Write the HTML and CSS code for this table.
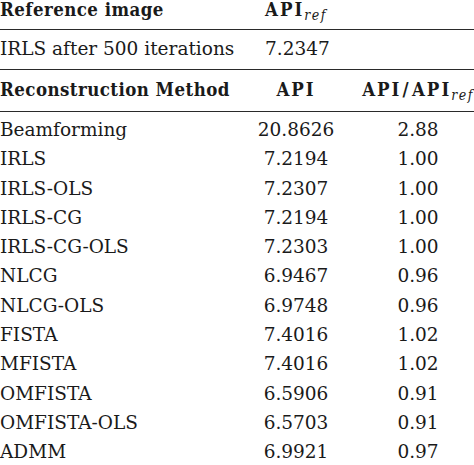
FILE: index.html
```html
<!DOCTYPE html>
<html>
<head>
<meta charset="utf-8">
<link rel="stylesheet" href="styles.css">
</head>
<body>
<div class="sheet">
  <div class="top">
    <div class="row r1 rule">
      <div class="c b">Reference image</div>
      <div class="c b"><span class="wide">API</span><sub class="sub">ref</sub></div>
    </div>
    <div class="row r2 rule">
      <div class="c">IRLS after 500 iterations</div>
      <div class="c">7.2347</div>
    </div>
  </div>
  <div class="main">
    <div class="row hdr rule">
      <div class="c b">Reconstruction Method</div>
      <div class="c b ctr"><span class="wide">API</span></div>
      <div class="c b ctr"><span class="wide">API</span><span class="slash">/</span><span class="wide">API</span><sub class="sub">ref</sub></div>
    </div>
    <div class="body">
      <div class="row"><div class="c">Beamforming</div><div class="c ctr">20.8626</div><div class="c ctr">2.88</div></div>
      <div class="row"><div class="c">IRLS</div><div class="c ctr">7.2194</div><div class="c ctr">1.00</div></div>
      <div class="row"><div class="c">IRLS-OLS</div><div class="c ctr">7.2307</div><div class="c ctr">1.00</div></div>
      <div class="row"><div class="c">IRLS-CG</div><div class="c ctr">7.2194</div><div class="c ctr">1.00</div></div>
      <div class="row"><div class="c">IRLS-CG-OLS</div><div class="c ctr">7.2303</div><div class="c ctr">1.00</div></div>
      <div class="row"><div class="c">NLCG</div><div class="c ctr">6.9467</div><div class="c ctr">0.96</div></div>
      <div class="row"><div class="c">NLCG-OLS</div><div class="c ctr">6.9748</div><div class="c ctr">0.96</div></div>
      <div class="row"><div class="c">FISTA</div><div class="c ctr">7.4016</div><div class="c ctr">1.02</div></div>
      <div class="row"><div class="c">MFISTA</div><div class="c ctr">7.4016</div><div class="c ctr">1.02</div></div>
      <div class="row"><div class="c">OMFISTA</div><div class="c ctr">6.5906</div><div class="c ctr">0.91</div></div>
      <div class="row"><div class="c">OMFISTA-OLS</div><div class="c ctr">6.5703</div><div class="c ctr">0.91</div></div>
      <div class="row"><div class="c">ADMM</div><div class="c ctr">6.9921</div><div class="c ctr">0.97</div></div>
    </div>
  </div>
</div>
</body>
</html>
```
FILE: styles.css
```css
html, body {
  margin: 0;
  padding: 0;
  background: #ffffff;
}
body {
  width: 474px;
  height: 465px;
  overflow: hidden;
}
.sheet {
  width: 520px;
  font-family: "DejaVu Serif", "Liberation Serif", serif;
  font-size: 18.5px;
  color: #1a1a1a;
}
.row {
  display: grid;
  white-space: nowrap;
}
.top .row {
  grid-template-columns: 265px 1fr;
}
.main .row {
  grid-template-columns: 248px 96px 148px;
}
.rule {
  border-bottom: 1px solid #2a2a2a;
}
.r1 {
  line-height: 20px;
  height: 29px;
}
.r2 {
  line-height: 26.8px;
  padding-top: 6px;
  height: 33px;
}
.hdr {
  line-height: 26.8px;
  padding-top: 7px;
  height: 34px;
}
.body {
  padding-top: 3px;
}
.body .row {
  line-height: 29.3px;
  height: 29.3px;
}
.b {
  font-family: "DejaVu Serif Condensed", "DejaVu Serif", serif;
  font-stretch: condensed;
  font-weight: bold;
  letter-spacing: 0.45px;
}
.wide {
  letter-spacing: 2px;
}
.slash {
  margin: 0 3px 0 1px;
}
.ctr {
  text-align: center;
}
.sub {
  font-family: "DejaVu Serif", serif;
  font-style: italic;
  font-weight: normal;
  font-size: 14px;
  line-height: 0;
  vertical-align: -4px;
  letter-spacing: 1.5px;
}
```
